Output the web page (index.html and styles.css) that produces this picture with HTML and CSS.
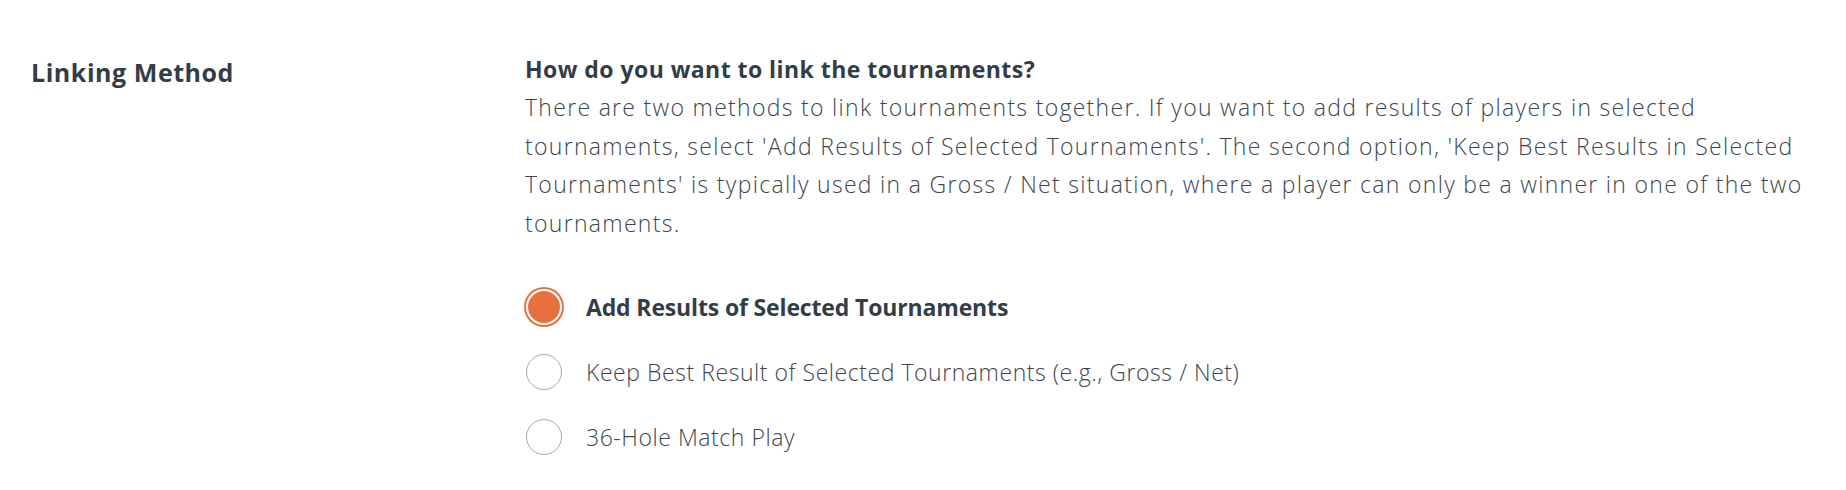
FILE: index.html
```html
<!DOCTYPE html>
<html>
<head>
<meta charset="utf-8">
<link rel="stylesheet" href="styles.css">
</head>
<body>
<section class="setting">
  <h2 class="setting-label">Linking Method</h2>
  <div class="setting-body">
    <h3 class="question">How do you want to link the tournaments?</h3>
    <p class="help">There are two methods to link tournaments together. If you want to add results of players in selected tournaments, select 'Add Results of Selected Tournaments'. The second option, 'Keep Best Results in Selected Tournaments' is typically used in a Gross / Net situation, where a player can only be a winner in one of the two tournaments.</p>
    <div class="options">
      <label class="option selected"><span class="radio"></span><span class="option-text">Add Results of Selected Tournaments</span></label>
      <label class="option"><span class="radio"></span><span class="option-text">Keep Best Result of Selected Tournaments (e.g., Gross / Net)</span></label>
      <label class="option"><span class="radio"></span><span class="option-text">36-Hole Match Play</span></label>
    </div>
  </div>
</section>
</body>
</html>
```
FILE: styles.css
```css
html, body {
  margin: 0;
  padding: 0;
  background: #ffffff;
}
body {
  font-family: "Open Sans", Lato, sans-serif;
  color: #333d47;
}
.setting {
  display: flex;
  padding: 50px 0 0 31px;
}
.setting-label {
  width: 494px;
  flex: none;
  margin: 0;
  padding-top: 6px;
  font-size: 25px;
  font-weight: 700;
  letter-spacing: 0.55px;
  line-height: 32px;
}
.setting-body {
  width: 1287px;
}
.question {
  margin: 0;
  font-size: 23px;
  font-weight: 700;
  letter-spacing: 0.45px;
  line-height: 38px;
}
.help {
  margin: 0;
  font-size: 23px;
  font-weight: 300;
  letter-spacing: 1.3px;
  line-height: 38.5px;
  color: #3d4650;
}
.options {
  display: flex;
  flex-direction: column;
  gap: 27px;
  margin-top: 46px;
}
.option {
  display: flex;
  align-items: center;
  gap: 24px;
  font-size: 23px;
  font-weight: 300;
  letter-spacing: 0.55px;
  line-height: 38px;
  color: #3d4650;
}
.radio {
  flex: none;
  width: 36px;
  height: 36px;
  box-sizing: border-box;
  border: 1px solid #a3abb4;
  border-radius: 50%;
  background: #fff;
  margin-left: 1px;
}
.selected .radio {
  background: #e8703f;
  border: 2px solid #fff;
  box-shadow: 0 0 0 2px #e8703f;
}
.selected .option-text {
  font-weight: 700;
  letter-spacing: -0.15px;
  color: #333d47;
}
```
